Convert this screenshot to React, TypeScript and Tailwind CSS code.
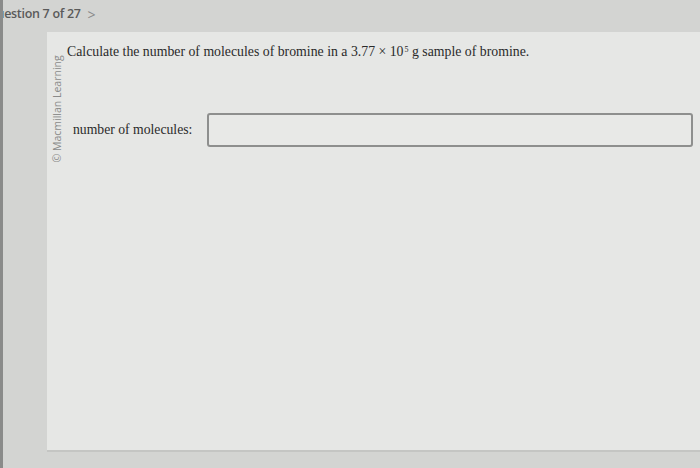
export default function App() {
    return (
        <div className="relative w-[700px] h-[468px] overflow-hidden bg-[#d3d4d2] border-l-[3px] border-[#8a8b8a] font-['Open_Sans',sans-serif]">
            {/* Top bar */}
            <div className="flex items-center h-[32px] pb-[4px]">
                <span className="ml-[-16px] text-[12.5px] font-semibold text-[#5a5a5a] tracking-[-0.3px] whitespace-nowrap">Question 7 of 27</span>
                <span className="ml-[7px] text-[14px] text-[#8a8a8a]">&gt;</span>
            </div>

            {/* Panel */}
            <div className="ml-[44px] h-[420px] bg-[#e6e7e5] border-b-2 border-[#c4c5c3] flex">
                <div className="w-[17px] shrink-0 flex justify-end">
                    <div className="mt-[16px] h-[122px] w-[12px] flex items-center justify-center">
                        <span className="-rotate-90 whitespace-nowrap text-[10.5px] text-[#8a8b8a]">© Macmillan Learning</span>
                    </div>
                </div>
                <div className="flex-1 pl-[3px] font-['Liberation_Serif',serif] text-[#2a2a2a]">
                    <p className="mt-[11px] text-[13.8px] leading-[18px] whitespace-nowrap">
                        Calculate the number of molecules of bromine in a 3.77 × 10
                        <sup className="text-[8px] ml-[1px]">5</sup> g sample of bromine.
                    </p>
                    <div className="mt-[52px] flex items-center">
                        <span className="ml-[6px] text-[13.7px] whitespace-nowrap">number of molecules:</span>
                        <div className="ml-[15px] h-[34px] w-[486px] shrink-0 border-2 border-[#8e8f8e] rounded-[3px] bg-[#e8e9e7]" />
                    </div>
                </div>
            </div>
        </div>
    );
}
